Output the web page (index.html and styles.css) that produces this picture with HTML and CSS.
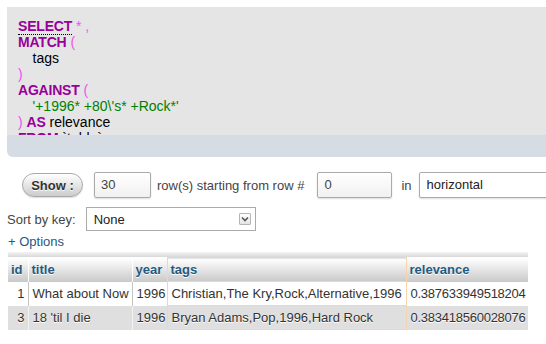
FILE: index.html
```
<!DOCTYPE html>
<html>
<head>
<meta charset="utf-8">
<link rel="stylesheet" href="styles.css">
</head>
<body>
<div class="page">
  <div class="sql">
    <div class="code">
      <div class="ln"><a class="kw link">SELECT</a> <span class="p">*</span> <span class="p">,</span></div>
      <div class="ln"><span class="kw">MATCH</span> <span class="p">(</span></div>
      <div class="ln ind">tags</div>
      <div class="ln"><span class="p">)</span></div>
      <div class="ln"><span class="kw">AGAINST</span> <span class="p">(</span></div>
      <div class="ln ind"><span class="q">'+1996* +80\'s* +Rock*'</span></div>
      <div class="ln"><span class="p">)</span> <span class="kw">AS</span> relevance</div>
      <div class="ln"><span class="kw">FROM</span> `table`</div>
    </div>
    <div class="tools"></div>
  </div>

  <div class="nav">
    <button class="show">Show :</button>
    <div class="txt n30">30</div>
    <span class="lbl">row(s) starting from row #</span>
    <div class="txt n0">0</div>
    <span class="lbl-in">in</span>
    <div class="txt mode">horizontal</div>
  </div>

  <div class="sort">
    <span>Sort by key:</span>
    <div class="select">
      <span>None</span>
      <span class="arrow"><svg width="8" height="6" viewBox="0 0 8 6"><path d="M1 1.5 L4 4.5 L7 1.5" fill="none" stroke="#555" stroke-width="1.6"/></svg></span>
    </div>
  </div>

  <a class="options">+ Options</a>

  <div class="band"></div>
  <table class="data">
    <colgroup>
      <col class="c-id"><col class="c-title"><col class="c-year"><col class="c-tags"><col class="c-rel">
    </colgroup>
    <thead>
      <tr>
        <th>id</th><th>title</th><th>year</th><th class="cond">tags</th><th>relevance</th>
      </tr>
    </thead>
    <tbody>
      <tr class="odd">
        <td class="num">1</td><td>What about Now</td><td class="num">1996</td><td class="cond">Christian,The Kry,Rock,Alternative,1996</td><td class="rel">0.387633949518204</td>
      </tr>
      <tr class="even">
        <td class="num">3</td><td>18 'til I die</td><td class="num">1996</td><td class="cond">Bryan Adams,Pop,1996,Hard Rock</td><td class="rel">0.383418560028076</td>
      </tr>
    </tbody>
  </table>
</div>
</body>
</html>
```
FILE: styles.css
```
html, body {
  margin: 0;
  padding: 0;
  overflow: hidden;
  background: #fff;
}
body {
  font-family: "Liberation Sans", Arial, sans-serif;
  font-size: 13px;
  color: #444;
}
.page {
  padding: 7px 0 0 7px;
}

/* SQL box */
.sql {
  margin-right: -60px;
  border-bottom-left-radius: 6px;
  overflow: hidden;
}
.code {
  background: #e5e5e5;
  height: 117px;
  padding: 11px 0 0 11px;
  font-size: 14px;
  line-height: 16px;
  overflow: hidden;
  color: #000;
}
.ln {
  white-space: nowrap;
}
.ind {
  padding-left: 14.5px;
}
.kw {
  color: #990099;
  font-weight: bold;
  letter-spacing: -0.2px;
}
.link {
  border-bottom: 1px dotted #000;
}
.p {
  color: #f050f0;
}
.q {
  color: #008000;
}
.tools {
  background: #d5dce3;
  height: 22px;
}

/* navigation row */
.nav {
  display: flex;
  align-items: center;
  margin-top: 15px;
  height: 26px;
  white-space: nowrap;
  color: #444;
}
.nav > * {
  flex: none;
}
.show {
  margin: 0 0 0 15px;
  width: 61px;
  height: 24px;
  padding: 0;
  border: 1px solid #aaa;
  border-radius: 12px;
  background: linear-gradient(#ffffff, #cccccc);
  font-family: "Liberation Sans", Arial, sans-serif;
  font-size: 13px;
  font-weight: bold;
  color: #333;
  text-shadow: 0 1px 0 #fff;
  box-shadow: 0 1px 1px #ddd;
}
.txt {
  box-sizing: border-box;
  height: 26px;
  border: 1px solid #aaa;
  border-radius: 2px;
  background: linear-gradient(#ffffff, #f1f1f1);
  box-shadow: 0 1px 2px #ddd;
  padding-left: 6px;
  line-height: 24px;
  color: #444;
}
.n30 {
  margin-left: 11px;
  width: 57px;
}
.lbl {
  margin-left: 6px;
}
.n0 {
  margin-left: 13px;
  width: 75px;
}
.lbl-in {
  margin-left: 9px;
}
.mode {
  margin-left: 7px;
  width: 180px;
  background: #fff;
  color: #222;
  padding-left: 7px;
}

/* sort row */
.sort {
  display: flex;
  align-items: center;
  margin-top: 9px;
  height: 24px;
}
.select {
  box-sizing: border-box;
  margin-left: 10px;
  width: 170px;
  height: 24px;
  border: 1px solid #aaa;
  background: #fff;
  display: flex;
  align-items: center;
  justify-content: space-between;
  padding: 0 4px 0 7px;
  color: #222;
}
.arrow {
  box-sizing: border-box;
  width: 12px;
  height: 12px;
  border: 1px solid #b5b5b5;
  border-radius: 1px;
  background: linear-gradient(#ffffff, #e4e4e4);
  display: flex;
  align-items: center;
  justify-content: center;
}

.options {
  display: block;
  margin-top: 3px;
  line-height: 16px;
  color: #235a81;
  margin-left: 1px;
}

/* results table */
.band {
  margin-top: 2px;
  margin-left: 1px;
  width: 520px;
  height: 5px;
  background: linear-gradient(#f4f4f4, #d8d8d8);
}
.data {
  margin-left: 1px;
  width: 520px;
  table-layout: fixed;
  border-collapse: collapse;
  border-spacing: 0;
  color: #333;
}
.c-id { width: 20px; }
.c-title { width: 104px; }
.c-year { width: 35px; }
.c-tags { width: 239px; }
.c-rel { width: 122px; }

.data th, .data td {
  padding: 0 4px;
  height: 23px;
  text-align: left;
  white-space: nowrap;
  vertical-align: middle;
  text-shadow: 0 1px 0 #fff;
}
.data th {
  background: linear-gradient(#ffffff, #c9c9c9);
  color: #235a81;
  font-weight: bold;
  border-left: 1px solid #fff;
  padding: 0 3px;
}
.data th:first-child {
  border-left: none;
}
.data tr.odd td {
  background: #fff;
  border-left: 1px solid #c4c4c4;
}
.data tr.even td {
  background: #dfdfdf;
  border-left: 1px solid #f2f2f2;
}
.data tr td:first-child {
  border-left: none;
}
.data td.num {
  text-align: right;
  padding-right: 3px;
}
.data td.rel {
  letter-spacing: -0.25px;
}
.data th.cond,
.data tr.odd td.cond,
.data tr.even td.cond {
  border: 1px solid #f6d4b0;
}
```
